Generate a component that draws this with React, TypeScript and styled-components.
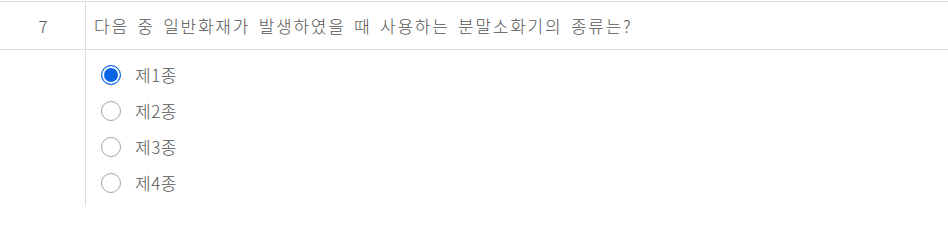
import React from "react";
import styled, { createGlobalStyle } from "styled-components";

const Global = createGlobalStyle`
  body {
    margin: 0;
    background: #fff;
    font-family: "Noto Sans CJK KR", "Noto Sans", sans-serif;
    color: #444;
  }
`;

const Table = styled.div`
  width: 948px;
  margin-top: 1px;
  border-top: 1px solid #dedede;
  display: grid;
  grid-template-columns: 86px 1fr;
`;

const NumCell = styled.div`
  border-right: 1px solid #dedede;
  border-bottom: 1px solid #dedede;
  height: 47px;
  display: flex;
  align-items: center;
  justify-content: center;
  padding-left: 1px;
  font-size: 17px;
  font-weight: 300;
  color: #555;
`;

const Question = styled.div`
  border-bottom: 1px solid #dedede;
  height: 47px;
  display: flex;
  align-items: center;
  padding-left: 8px;
  font-size: 17px;
  font-weight: 300;
  letter-spacing: 1.75px;
  word-spacing: 3px;
  color: #555;
`;

const EmptyCell = styled.div`
  border-right: 1px solid #dedede;
  height: 156px;
`;

const Options = styled.div`
  display: flex;
  flex-direction: column;
  gap: 16px;
  padding: 15px 0 0 15px;
`;

const Option = styled.label`
  display: flex;
  align-items: center;
  gap: 14px;
  height: 20px;
  line-height: 20px;
  font-size: 17px;
  font-weight: 300;
  letter-spacing: 0.5px;
  color: #555;
`;

const Radio = styled.input`
  appearance: none;
  margin: 0;
  flex: none;
  width: 20px;
  height: 20px;
  border-radius: 50%;
  border: 1.5px solid #a3a3ad;
  background: #fff;
  box-sizing: border-box;

  &:checked {
    border: 1.5px solid #0a64e6;
    background: #0a64e6;
    box-shadow: inset 0 0 0 2px #fff;
  }
`;

const choices = ["제1종", "제2종", "제3종", "제4종"];

export default function App() {
  return (
    <>
      <Global />
      <Table>
        <NumCell>7</NumCell>
        <Question>다음 중 일반화재가 발생하였을 때 사용하는 분말소화기의 종류는?</Question>
        <EmptyCell />
        <Options>
          {choices.map((c, i) => (
            <Option key={c}>
              <Radio type="radio" name="q7" defaultChecked={i === 0} />
              {c}
            </Option>
          ))}
        </Options>
      </Table>
    </>
  );
}
